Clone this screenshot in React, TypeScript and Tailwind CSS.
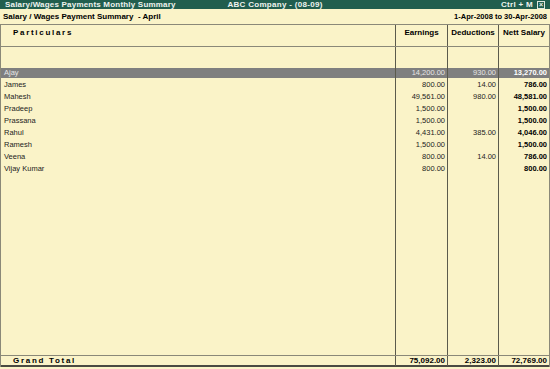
import React from 'react'

// Tally-style salary summary report, one screen.

interface PayRow {
  name: string
  earnings: string
  deductions: string
  nett: string
  selected?: boolean
}

const rows: PayRow[] = [
  { name: 'Ajay', earnings: '14,200.00', deductions: '930.00', nett: '13,270.00', selected: true },
  { name: 'James', earnings: '800.00', deductions: '14.00', nett: '786.00' },
  { name: 'Mahesh', earnings: '49,561.00', deductions: '980.00', nett: '48,581.00' },
  { name: 'Pradeep', earnings: '1,500.00', deductions: '', nett: '1,500.00' },
  { name: 'Prassana', earnings: '1,500.00', deductions: '', nett: '1,500.00' },
  { name: 'Rahul', earnings: '4,431.00', deductions: '385.00', nett: '4,046.00' },
  { name: 'Ramesh', earnings: '1,500.00', deductions: '', nett: '1,500.00' },
  { name: 'Veena', earnings: '800.00', deductions: '14.00', nett: '786.00' },
  { name: 'Vijay Kumar', earnings: '800.00', deductions: '', nett: '800.00' },
]

const cols = 'grid grid-cols-[394px_52px_51px_51px]'
const line = 'border-l border-[#5b5a4c]'

function Row({ r }: { r: PayRow }) {
  const sel = r.selected
  const cell = sel ? 'h-[10px] mt-px bg-[#7f7f7f] text-[#e6e6e6]' : 'h-[12px] text-[#1c1c1c]'
  return (
    <div className={`${cols} h-[12px] text-[7.5px] leading-[10px]`}>
      <div>
        <div className={`${cell} pl-[3px] flex items-center`}>{r.name}</div>
      </div>
      <div className={line}>
        <div className={`${cell} pr-[2px] flex items-center justify-end`}>{r.earnings}</div>
      </div>
      <div className={line}>
        <div className={`${cell} pr-[2px] flex items-center justify-end`}>{r.deductions}</div>
      </div>
      <div className={line}>
        <div
          className={`${cell} pr-[2px] flex items-center justify-end font-bold ${
            sel ? 'text-white' : 'text-black'
          }`}
        >
          {r.nett}
        </div>
      </div>
    </div>
  )
}

function Spacer({ className }: { className: string }) {
  return (
    <div className={`${cols} ${className}`}>
      <div />
      <div className={line} />
      <div className={line} />
      <div className={line} />
    </div>
  )
}

export default function App() {
  return (
    <div
      className="w-[550px] h-[369px] bg-[#faf3c8] flex flex-col overflow-hidden text-black"
      style={{ fontFamily: '"Liberation Sans", Arial, sans-serif' }}
    >
      {/* title bar */}
      <div className="h-[9px] bg-[#215e4e] text-[#eef3ee] text-[8px] font-bold leading-[9px] grid grid-cols-[1fr_auto_1fr] items-center px-[5px]">
        <span className="tracking-[0.2px]">Salary/Wages Payments Monthly Summary</span>
        <span className="tracking-[0.3px]">ABC Company - (08-09)</span>
        <span className="flex items-center justify-end gap-[4px]">
          <span className="tracking-[0.3px]">Ctrl + M</span>
          <span className="w-[8px] h-[8px] border border-[#dfe8df] flex items-center justify-center text-[7px] leading-none">
            ×
          </span>
        </span>
      </div>

      {/* report heading */}
      <div className="h-[15px] flex items-center justify-between pl-[3px] pr-[3px] text-[8px] font-bold">
        <span>Salary / Wages Payment Summary&nbsp;&nbsp;- April</span>
        <span className="text-[7.5px]">1-Apr-2008 to 30-Apr-2008</span>
      </div>

      {/* table */}
      <div className="flex-1 flex flex-col border-l border-r border-[#8a8878]">
        <div className={`${cols} h-[23px] border-t border-b border-[#8a8878] text-[8px] font-bold leading-[10px]`}>
          <div className="pl-[12px] pt-[3px] tracking-[1.7px]">Particulars</div>
          <div className={`${line} pt-[3px] text-center`}>Earnings</div>
          <div className={`${line} pt-[3px] text-center`}>Deductions</div>
          <div className={`${line} pt-[3px] text-center`}>Nett Salary</div>
        </div>
        <Spacer className="h-[20px]" />
        {rows.map((r) => (
          <Row key={r.name} r={r} />
        ))}
        <Spacer className="flex-1" />
        <div className={`${cols} h-[12px] border-t border-b-2 border-t-[#8a8878] border-b-[#4a4a42] text-[8px] font-bold leading-[10px]`}>
          <div className="pl-[12px] tracking-[1.7px]">Grand Total</div>
          <div className={`${line} pr-[2px] text-right`}>75,092.00</div>
          <div className={`${line} pr-[2px] text-right`}>2,323.00</div>
          <div className={`${line} pr-[2px] text-right`}>72,769.00</div>
        </div>
      </div>
      <div className="h-[2px]" />
    </div>
  )
}
